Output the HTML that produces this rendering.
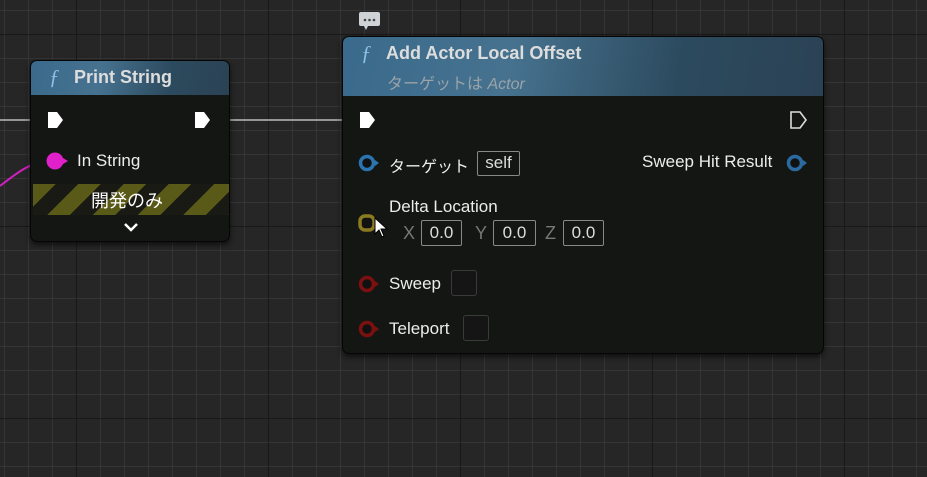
<!DOCTYPE html>
<html><head><meta charset="utf-8"><style>
*{margin:0;padding:0;box-sizing:border-box}
body{width:927px;height:477px;overflow:hidden;position:relative;font-family:"Liberation Sans","Noto Sans CJK JP",sans-serif;
background-color:#262626;
background-image:
linear-gradient(to right,#191919 1px,transparent 1px),
linear-gradient(to bottom,#191919 1px,transparent 1px),
linear-gradient(to right,#353535 1px,transparent 1px),
linear-gradient(to bottom,#353535 1px,transparent 1px);
background-size:192px 192px,192px 192px,24px 24px,24px 24px;
background-position:76px 0,0 34px,4px 0,0 10px;}
.abs{position:absolute}
.node{position:absolute;background:#141614;border:1px solid #050505;border-radius:7px;box-shadow:0 3px 6px rgba(0,0,0,.6);overflow:hidden}
.hdr{position:absolute;left:0;right:0;top:0;background:linear-gradient(100deg,#3a6a8c 0%,#46728f 35%,#2c4a5e 70%,#2b4254 100%)}
.t{position:absolute;color:#ececec;font-size:17px;white-space:nowrap}
.f{font-family:"Liberation Serif",serif;font-style:italic;color:#8cc0e6;font-size:21px;position:absolute}
.box{position:absolute;border:1px solid #888;border-radius:2px;color:#ddd;font-size:17px;text-align:center;line-height:21px}
.cb{position:absolute;width:26px;height:26px;border:1px solid #3a3a3a;border-radius:3px;background:#151515}
</style></head><body>
<svg class="abs" style="left:0;top:0" width="927" height="477">
<line x1="0" y1="120" x2="46" y2="120" stroke="#bbb" stroke-width="1.5"/>
<line x1="214" y1="120" x2="360" y2="120" stroke="#bbb" stroke-width="1.5"/>
<path d="M0 186 C18 172 30 163 48 160" stroke="#d020c0" stroke-width="2" fill="none"/>
</svg>
<div class="node" style="left:30px;top:60px;width:200px;height:182px">
<div class="hdr" style="height:34px"></div>
<div class="f" style="left:18px;top:4px">ƒ</div>
<div class="t" style="left:43px;top:6px;font-weight:bold;font-size:18px;color:#ddd">Print String</div>
<svg class="abs" style="left:15px;top:50px" width="20" height="20"><path d="M2 1H11L17 9L11 17H2Z" fill="#fff"/></svg>
<svg class="abs" style="left:162px;top:50px" width="20" height="20"><path d="M2 1H11L17 9L11 17H2Z" fill="#fff"/></svg>
<svg class="abs" style="left:14px;top:90px" width="26" height="20"><circle cx="10" cy="10" r="8.5" fill="#e020c8"/><path d="M18 7L23 10L18 13Z" fill="#e020c8"/></svg>
<div class="t" style="left:46px;top:90px">In String</div>
<div class="abs" style="left:2px;top:123px;width:196px;height:31px;background:repeating-linear-gradient(135deg,#5a5a18 0 16px,#1a1a14 16px 32px)"></div>
<div class="t" style="left:60px;top:126px;font-size:18px;color:#fff">開発のみ</div>
<svg class="abs" style="left:92px;top:160px" width="16" height="12"><path d="M2 3L8 9L14 3" stroke="#fff" stroke-width="2.5" fill="none"/></svg>
</div>
<svg class="abs" style="left:358px;top:10px" width="24" height="22"><rect x="1" y="2" width="21" height="14" rx="2" fill="#cfd3d6"/><path d="M6 16L8 20L10 16Z" fill="#cfd3d6"/><circle cx="7" cy="10" r="1.3" fill="#444"/><circle cx="11.5" cy="10" r="1.3" fill="#444"/><circle cx="16" cy="10" r="1.3" fill="#444"/></svg>
<div class="node" style="left:342px;top:36px;width:482px;height:318px">
<div class="hdr" style="height:59px"></div>
<div class="f" style="left:18px;top:4px">ƒ</div>
<div class="t" style="left:43px;top:6px;font-weight:bold;font-size:18px;color:#ddd">Add Actor Local Offset</div>
<div class="t" style="left:44px;top:33px;color:#9aa3a8;font-size:16px">ターゲットは <i>Actor</i></div>
<svg class="abs" style="left:15px;top:74px" width="20" height="20"><path d="M2 1H11L17 9L11 17H2Z" fill="#fff"/></svg>
<svg class="abs" style="left:446px;top:74px" width="20" height="20"><path d="M2 1H11L17 9L11 17H2Z" fill="none" stroke="#ddd" stroke-width="1.6"/></svg>
<svg class="abs" style="left:14px;top:116px" width="26" height="20"><circle cx="10" cy="10" r="6.5" fill="#111" stroke="#2a74b0" stroke-width="3.5"/><path d="M18 7L22 10L18 13Z" fill="#2a74b0"/></svg>
<div class="t" style="left:46px;top:116px;font-size:16px">ターゲット</div>
<div class="box" style="left:134px;top:114px;width:43px;height:25px">self</div>
<div class="t" style="left:299px;top:115px">Sweep Hit Result</div>
<svg class="abs" style="left:442px;top:116px" width="26" height="20"><circle cx="10" cy="10" r="6.5" fill="#111" stroke="#2a6aa0" stroke-width="3.5"/><path d="M18 7L22 10L18 13Z" fill="#2a6aa0"/></svg>
<div class="t" style="left:46px;top:160px">Delta Location</div>
<svg class="abs" style="left:14px;top:176px" width="26" height="24"><rect x="3" y="3" width="14" height="14" rx="5" fill="#111" stroke="#8a7a20" stroke-width="3.5"/></svg>
<svg class="abs" style="left:31px;top:180px" width="16" height="22"><path d="M1 1V17L5 13L8 20L10 19L7 12H13Z" fill="#fff" stroke="#000" stroke-width="1"/></svg>
<div class="t" style="left:60px;top:186px;color:#777;font-size:18px">X</div>
<div class="box" style="left:78px;top:183px;width:41px;height:26px;line-height:24px">0.0</div>
<div class="t" style="left:132px;top:186px;color:#777;font-size:18px">Y</div>
<div class="box" style="left:150px;top:183px;width:43px;height:26px;line-height:24px">0.0</div>
<div class="t" style="left:202px;top:186px;color:#777;font-size:18px">Z</div>
<div class="box" style="left:220px;top:183px;width:41px;height:26px;line-height:24px">0.0</div>
<svg class="abs" style="left:14px;top:237px" width="26" height="20"><circle cx="10" cy="10" r="6.5" fill="#111" stroke="#7a1010" stroke-width="3.5"/><path d="M18 7L22 10L18 13Z" fill="#7a1010"/></svg>
<div class="t" style="left:46px;top:237px">Sweep</div>
<div class="cb" style="left:108px;top:233px"></div>
<svg class="abs" style="left:14px;top:282px" width="26" height="20"><circle cx="10" cy="10" r="6.5" fill="#111" stroke="#7a1010" stroke-width="3.5"/><path d="M18 7L22 10L18 13Z" fill="#7a1010"/></svg>
<div class="t" style="left:46px;top:282px">Teleport</div>
<div class="cb" style="left:120px;top:278px"></div>
</div>
</body></html>
